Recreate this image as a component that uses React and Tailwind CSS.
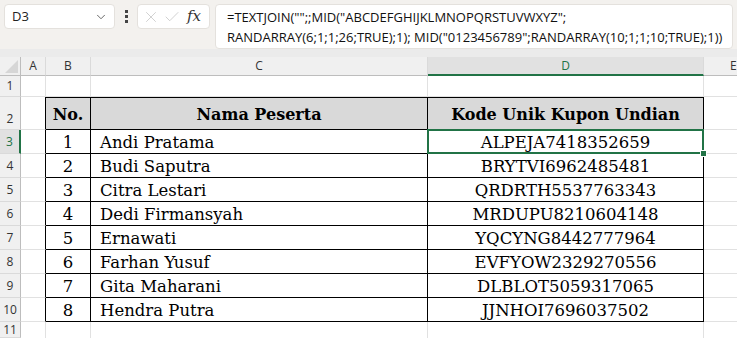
import { ChevronDown, X, Check } from 'lucide-react';

const rows = [
  ['1', 'Andi Pratama', 'ALPEJA7418352659'],
  ['2', 'Budi Saputra', 'BRYTVI6962485481'],
  ['3', 'Citra Lestari', 'QRDRTH5537763343'],
  ['4', 'Dedi Firmansyah', 'MRDUPU8210604148'],
  ['5', 'Ernawati', 'YQCYNG8442777964'],
  ['6', 'Farhan Yusuf', 'EVFYOW2329270556'],
  ['7', 'Gita Maharani', 'DLBLOT5059317065'],
  ['8', 'Hendra Putra', 'JJNHOI7696037502'],
];

const ui = { fontFamily: '"Open Sans", "Noto Sans", sans-serif' };
const cell = { fontFamily: '"DejaVu Serif", "Liberation Serif", serif' };

export default function App() {
  return (
    <div className="w-[737px] h-[338px] overflow-hidden bg-white" style={ui}>
      {/* Formula bar */}
      <div className="h-[49px] bg-[#f3f1ee] flex items-start gap-[5px] px-[4px] pt-[4px]">
        <div className="w-[111px] h-[25px] bg-white border border-[#e4e1dd] rounded-[4px] flex items-center justify-between pl-[7px] pr-[6px] text-[13px] text-[#222]">
          <span>D3</span>
          <ChevronDown size={14} strokeWidth={1.5} className="text-[#555]" />
        </div>
        <div className="w-[12px] h-[25px] flex flex-col items-center justify-center gap-[2px]">
          <span className="w-[3px] h-[3px] bg-[#444]" />
          <span className="w-[3px] h-[3px] bg-[#444]" />
          <span className="w-[3px] h-[3px] bg-[#444]" />
        </div>
        <div className="w-[73px] h-[25px] bg-white border border-[#e4e1dd] rounded-[4px] flex items-center pl-[4px] gap-[3px] text-[#c2c2c2]">
          <X size={18} strokeWidth={1} />
          <Check size={18} strokeWidth={1} />
          <span className="ml-[3px] text-[#333] italic text-[15px]" style={{ fontFamily: '"DejaVu Serif", serif' }}>fx</span>
        </div>
        <div className="flex-1 h-[45px] bg-white border border-[#e4e1dd] rounded-[4px] pl-[11px] pt-[2px] text-[13px] leading-[20px] text-[#111] whitespace-nowrap">
          <div>=TEXTJOIN("";;MID("ABCDEFGHIJKLMNOPQRSTUVWXYZ";</div>
          <div>RANDARRAY(6;1;1;26;TRUE);1); MID("0123456789";RANDARRAY(10;1;1;10;TRUE);1))</div>
        </div>
      </div>
      <div className="h-[8px] bg-[#ebebeb]" />

      {/* Sheet */}
      <div className="grid grid-cols-[21px_25px_45px_337px_276px_33px] grid-rows-[19px_21px_33px_repeat(8,24px)_16px]">
        {/* header row */}
        <div className="bg-[#f0f0f0] border-r border-b border-[#bdbdbd] relative">
          <div className="absolute right-[2px] bottom-[2px] w-0 h-0 border-l-[13px] border-l-transparent border-b-[13px] border-b-[#d6d6d6]" />
        </div>
        {['A', 'B', 'C'].map((c) => (
          <div key={c} className="bg-[#f0f0f0] border-r border-b border-[#bdbdbd] border-r-[#dadada] flex items-center justify-center text-[12px] text-[#333]">
            {c}
          </div>
        ))}
        <div className="bg-[#e1e1e1] border-r border-r-[#dadada] border-b-2 border-[#217346] flex items-center justify-center text-[12px] text-[#217346]">
          D
        </div>
        <div className="bg-[#f0f0f0] border-b border-[#bdbdbd] flex items-center pl-[26px] text-[12px] text-[#333]">
          E
        </div>

        {/* row 1 */}
        <RowHead n="1" />
        <div className="border-r border-b border-[#e1e1e1]" />
        <div className="border-r border-b border-[#e1e1e1]" />
        <div className="border-r border-b border-[#e1e1e1]" />
        <div className="border-r border-b border-[#e1e1e1]" />
        <div className="border-b border-[#e1e1e1]" />

        {/* row 2 header */}
        <RowHead n="2" align="end" />
        <div className="border-r border-b border-r-black border-b-[#e1e1e1]" />
        <div className="bg-[#d9d9d9] border-r border-b border-t border-black flex items-center justify-center text-[16px] font-bold text-black pt-[3px]" style={cell}>
          No.
        </div>
        <div className="bg-[#d9d9d9] border-r border-b border-t border-black flex items-center justify-center text-[16px] font-bold text-black pt-[3px]" style={cell}>
          Nama Peserta
        </div>
        <div className="bg-[#d9d9d9] border-r border-b border-t border-black flex items-center justify-center text-[16px] font-bold text-black pt-[3px]" style={cell}>
          Kode Unik Kupon Undian
        </div>
        <div className="border-b border-[#e1e1e1]" />

        {rows.map(([no, name, code], i) => (
          <Row key={no} n={String(i + 3)} no={no} name={name} code={code} selected={i === 0} />
        ))}

        {/* row 11 */}
        <RowHead n="11" />
        <div className="border-r border-[#e1e1e1]" />
        <div className="border-r border-[#e1e1e1]" />
        <div className="border-r border-[#e1e1e1]" />
        <div className="border-r border-[#e1e1e1]" />
        <div />
      </div>
    </div>
  );
}

function RowHead({ n, align, selected }) {
  return (
    <div
      className={`border-b border-[#dadada] flex justify-center text-[12px] ${
        align === 'end' ? 'items-end pb-[1px]' : 'items-center'
      } ${
        selected
          ? 'bg-[#e1e1e1] border-r-2 border-r-[#217346] text-[#217346]'
          : 'bg-[#f0f0f0] border-r border-r-[#bdbdbd] text-[#333]'
      }`}
    >
      {n}
    </div>
  );
}

function Row({ n, no, name, code, selected }) {
  const txt = 'flex items-center text-[16.5px] text-black pt-[3px]';
  return (
    <>
      <RowHead n={n} selected={selected} />
      <div className="border-r border-b border-r-black border-b-[#e1e1e1]" />
      <div className={`border-r border-b border-black justify-center ${txt}`} style={cell}>
        {no}
      </div>
      <div className={`border-r border-b border-black pl-[9px] ${txt}`} style={cell}>
        {name}
      </div>
      {selected ? (
        <div className={`relative -ml-[1px] -mt-[1px] border-2 border-[#217346] justify-center ${txt}`} style={cell}>
          {code}
          <span className="absolute z-10 -right-[5px] -bottom-[5px] w-[7px] h-[7px] bg-[#217346] border border-white" />
        </div>
      ) : (
        <div className={`border-r border-b border-black justify-center ${txt}`} style={cell}>
          {code}
        </div>
      )}
      <div className="border-b border-[#e1e1e1]" />
    </>
  );
}
